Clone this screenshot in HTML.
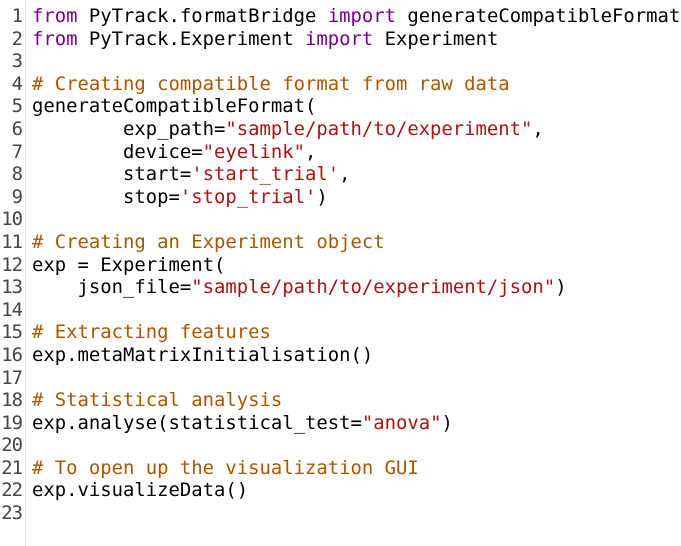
<!DOCTYPE html>
<html><head><style>
html,body{margin:0;padding:0;background:#fff;width:681px;height:546px;overflow:hidden}
.g{position:absolute;left:25px;top:0;width:1px;height:546px;background:#ddd}
pre{margin:0;position:absolute;top:5px;left:0;font-family:"DejaVu Sans Mono",monospace;font-size:18.9px;line-height:22.6px;color:#000;white-space:pre}
.n{display:inline-block;width:22px;text-align:right;color:#444;margin-right:10px;letter-spacing:-1px}
.k{color:#708}.c{color:#a50}.s{color:#a11}
</style></head><body>
<div class="g"></div>
<pre><span class="n">1</span><span class="k">from</span> PyTrack.formatBridge <span class="k">import</span> generateCompatibleFormat
<span class="n">2</span><span class="k">from</span> PyTrack.Experiment <span class="k">import</span> Experiment
<span class="n">3</span>
<span class="n">4</span><span class="c"># Creating compatible format from raw data</span>
<span class="n">5</span>generateCompatibleFormat(
<span class="n">6</span>        exp_path=<span class="s">"sample/path/to/experiment"</span>,
<span class="n">7</span>        device=<span class="s">"eyelink"</span>,
<span class="n">8</span>        start=<span class="s">'start_trial'</span>,
<span class="n">9</span>        stop=<span class="s">'stop_trial'</span>)
<span class="n">10</span>
<span class="n">11</span><span class="c"># Creating an Experiment object</span>
<span class="n">12</span>exp = Experiment(
<span class="n">13</span>    json_file=<span class="s">"sample/path/to/experiment/json"</span>)
<span class="n">14</span>
<span class="n">15</span><span class="c"># Extracting features</span>
<span class="n">16</span>exp.metaMatrixInitialisation()
<span class="n">17</span>
<span class="n">18</span><span class="c"># Statistical analysis</span>
<span class="n">19</span>exp.analyse(statistical_test=<span class="s">"anova"</span>)
<span class="n">20</span>
<span class="n">21</span><span class="c"># To open up the visualization GUI</span>
<span class="n">22</span>exp.visualizeData()
<span class="n">23</span></pre>
</body></html>
